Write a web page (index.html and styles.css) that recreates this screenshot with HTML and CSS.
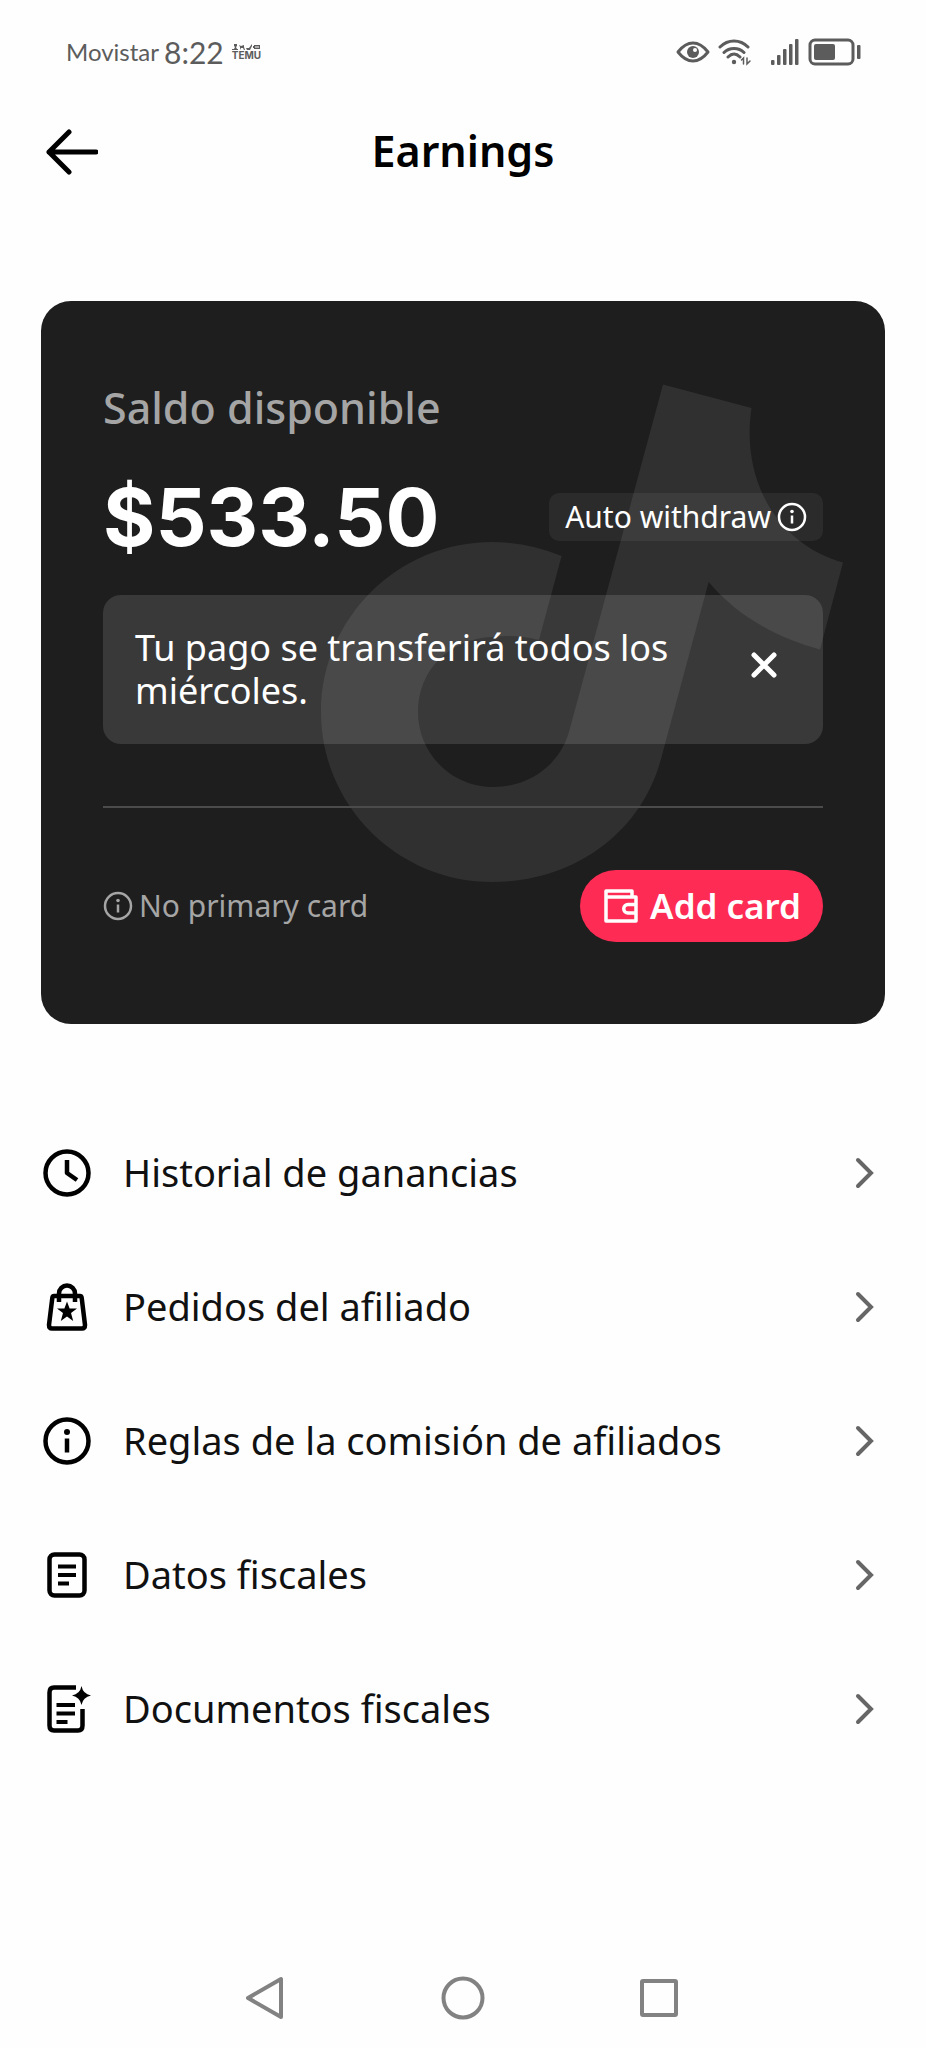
FILE: index.html
```html
<!DOCTYPE html>
<html lang="es">
<head>
  <meta charset="UTF-8">
  <meta name="viewport" content="width=device-width, initial-scale=1.0">
  <title>Earnings</title>
  <link rel="stylesheet" href="styles.css">
</head>
<body>
  <div class="status-bar">
    <div class="status-left">
      <span class="carrier">Movistar</span>
      <span class="clock">8:22</span>
      <span class="temu">
        <svg width="28" height="6" viewBox="0 0 28 6" fill="#5c5c5c">
          <path d="M1 5h5v1H0V5zM2 0h3v2L4 3l1 2H2l1-2-1-1zM7 1l2 1 3-1v2l1 3h-1l-1-2H9L8 6V3zM14 4h3l3-4v2l-2 4h-3zM22 1h6v4h-6zM21 2h1v2h-1z"/>
          <path d="M23 3h4" stroke="#fff" stroke-width="1"/>
        </svg>
        <span>TEMU</span>
      </span>
    </div>
    <div class="status-right">
      <svg width="34" height="24" viewBox="0 0 34 24" fill="none" stroke="#5c5c5c" stroke-width="3">
        <path d="M2 12Q9 3 17 3t15 9q-7 9-15 9T2 12z" stroke-linejoin="round"/>
        <circle cx="17" cy="12" r="6" fill="#5c5c5c" stroke="none"/>
        <circle cx="19" cy="10" r="2" fill="#fff" stroke="none"/>
      </svg>
      <svg class="wifi" width="34" height="28" viewBox="0 0 34 28" fill="none" stroke="#5c5c5c" stroke-width="3" stroke-linecap="round">
        <path d="M2 9Q8 3 16 3t14 6M6 14.500q4-4 10-4t10 4M10 19q3-3 6-3t6 3"/>
        <circle cx="16" cy="24" r="2.200" fill="#5c5c5c" stroke="none"/>
        <path d="M25.500 26v-6l-2 2M29 20v6l3-3" stroke-width="1.500"/>
      </svg>
      <svg width="30" height="28" viewBox="0 0 30 28" fill="#5c5c5c">
        <rect x="1" y="22" width="3.500" height="5" rx="1"/>
        <rect x="7" y="17" width="3.500" height="10" rx="1"/>
        <rect x="13" y="11" width="3.500" height="16" rx="1"/>
        <rect x="19" y="6" width="3.500" height="21" rx="1"/>
        <rect x="25" y="1" width="3.500" height="26" rx="1"/>
      </svg>
      <svg class="battery" width="54" height="28" viewBox="0 0 54 28">
        <rect x="2" y="2" width="43" height="24" rx="5" fill="none" stroke="#5c5c5c" stroke-width="3"/>
        <rect x="6" y="6" width="21" height="16" rx="2" fill="#5c5c5c"/>
        <rect x="49" y="7" width="3.500" height="14" rx="1" fill="#5c5c5c"/>
      </svg>
    </div>
  </div>

  <header class="header">
    <button class="back" type="button" aria-label="Back">
      <svg width="54" height="46" viewBox="0 0 54 46" fill="none" stroke="#000" stroke-width="5" stroke-linecap="round" stroke-linejoin="round">
        <path d="M25 3L5 23l20 20M5 23h47"/>
      </svg>
    </button>
    <h1 class="title">Earnings</h1>
  </header>

  <main class="content">
    <section class="card">
      <svg class="watermark" width="524" height="500" viewBox="320 383 524 500" fill="#303030">
        <path d="M663 384.500L751.500 408C741 478 775 543 843 562.500L820 649.500C777 638 737 616 708.700 582L661 759C641 833 574 882 492 882C398 882 321 806 321 712C321 618 398 542 492 542Q528 542 561.600 556L539 640Q516 634 493 637C450 638 418 670 418 712C418 754 452 787 493 787C530 787 558 765 568 735L570 728L663 384.500Z"/>
      </svg>
      <h2 class="label">Saldo disponible</h2>
      <div class="balance">
        <span class="amount">$533.50</span>
        <button class="auto" type="button">
          Auto withdraw
          <svg width="30" height="30" viewBox="0 0 30 30" fill="none" stroke="#fff">
            <circle cx="15" cy="15" r="13" stroke-width="2.500"/>
            <path d="M15 13.500v8" stroke-width="2.500"/>
            <circle cx="15" cy="9.500" r="1.800" fill="#fff" stroke="none"/>
          </svg>
        </button>
      </div>
      <div class="notice">
        <p>Tu pago se transferirá todos los miércoles.</p>
        <button class="close" type="button" aria-label="Cerrar">
          <svg width="28" height="28" viewBox="0 0 28 28" fill="none" stroke="#fff" stroke-width="5" stroke-linecap="round">
            <path d="M4 4l20 20M24 4L4 24"/>
          </svg>
        </button>
      </div>
      <div class="card-footer">
        <span class="primary">
          <svg width="30" height="30" viewBox="0 0 30 30" fill="none" stroke="#a5a5a5">
            <circle cx="15" cy="15" r="13" stroke-width="2.500"/>
            <path d="M15 13.500v8" stroke-width="2.500"/>
            <circle cx="15" cy="9.500" r="1.800" fill="#a5a5a5" stroke="none"/>
          </svg>
          No primary card
        </span>
        <button class="add" type="button">
          <svg width="34" height="34" viewBox="0 0 34 34" fill="none" stroke="#fff" stroke-width="3.500" stroke-linejoin="round">
            <path d="M28 8V2H2v30h30V8H2M32 15.500h-8a4 4 0 0 0 0 8.500h8"/>
          </svg>
          Add card
        </button>
      </div>
    </section>

    <nav class="menu">
      <a href="#historial">
        <svg width="48" height="48" viewBox="0 0 48 48" fill="none" stroke="#000" stroke-width="4.500">
          <circle cx="24" cy="24" r="21.500"/>
          <path d="M24 11v13l10 7" stroke-linejoin="round"/>
        </svg>
        <span>Historial de ganancias</span>
        <svg class="chevron" width="20" height="32" viewBox="0 0 20 32"><path d="M3 3l13 13L3 29"/></svg>
      </a>
      <a href="#pedidos">
        <svg width="48" height="48" viewBox="0 0 48 48" fill="none" stroke="#000" stroke-width="4.500">
          <path d="M11 13h26q1.500 0 1.700 2L42 42q0 3.500-3 3.500H9Q6 45.500 6 42l3.300-27q.2-2 1.700-2z"/>
          <path d="M16 19v-8.500a8 8 0 0 1 16 0V19"/>
          <path d="M24 18.500l2.600 7H34l-6 4.500 2.200 8-6.200-4.500-6.200 4.500L20 30l-6-4.500h7.400z" fill="#000" stroke="none"/>
        </svg>
        <span>Pedidos del afiliado</span>
        <svg class="chevron" width="20" height="32" viewBox="0 0 20 32"><path d="M3 3l13 13L3 29"/></svg>
      </a>
      <a href="#reglas">
        <svg width="48" height="48" viewBox="0 0 48 48" fill="none" stroke="#000" stroke-width="4.500">
          <circle cx="24" cy="24" r="21.500"/>
          <path d="M24 21.500v14"/>
          <circle cx="24" cy="15" r="3" fill="#000" stroke="none"/>
        </svg>
        <span>Reglas de la comisión de afiliados</span>
        <svg class="chevron" width="20" height="32" viewBox="0 0 20 32"><path d="M3 3l13 13L3 29"/></svg>
      </a>
      <a href="#datos">
        <svg width="48" height="48" viewBox="0 0 48 48" fill="none" stroke="#000" stroke-width="4.500">
          <rect x="6.500" y="3.500" width="35" height="41" rx="5"/>
          <path d="M15 15.500h18M15 24h18M15 32.500h11" stroke-width="4"/>
        </svg>
        <span>Datos fiscales</span>
        <svg class="chevron" width="20" height="32" viewBox="0 0 20 32"><path d="M3 3l13 13L3 29"/></svg>
      </a>
      <a href="#documentos">
        <svg width="48" height="48" viewBox="0 0 48 48" fill="none" stroke="#000" stroke-width="4.500">
          <path d="M33 2.500H11q-4.500 0-4.500 5v33q0 5 4.500 5h24q4.500 0 4.500-5V24"/>
          <path d="M13.500 20H32M13.500 28.500H32M13.500 37h11" stroke-width="4"/>
          <path d="M38.500 1q1.500 8 9.500 9.500-8 1.500-9.500 9.500-1.500-8-9.500-9.500 8-1.500 9.500-9.500z" fill="#000" stroke="none"/>
        </svg>
        <span>Documentos fiscales</span>
        <svg class="chevron" width="20" height="32" viewBox="0 0 20 32"><path d="M3 3l13 13L3 29"/></svg>
      </a>
    </nav>
  </main>

  <footer class="system-nav">
    <button type="button" aria-label="Back">
      <svg width="44" height="44" viewBox="0 0 44 44"><path d="M3 22L36 3v38z"/></svg>
    </button>
    <button type="button" aria-label="Home">
      <svg width="44" height="44" viewBox="0 0 44 44"><circle cx="22" cy="22" r="19.500"/></svg>
    </button>
    <button type="button" aria-label="Recent apps">
      <svg width="44" height="44" viewBox="0 0 44 44"><rect x="5" y="5" width="34" height="34" rx="1"/></svg>
    </button>
  </footer>
</body>
</html>
```
FILE: styles.css
```css
* {
  box-sizing: border-box;
}

body {
  display: flex;
  flex-direction: column;
  min-height: 100vh;
  margin: 0;
  background-color: #fefefe;
  color: #111;
  font-family: "Noto Sans", "Open Sans", sans-serif;
}

button {
  padding: 0;
  border: 0;
  background: none;
  color: inherit;
  font-family: inherit;
  cursor: pointer;
}

svg {
  display: block;
  flex-shrink: 0;
}

/* Status bar */
.status-bar {
  display: flex;
  justify-content: space-between;
  align-items: center;
  height: 103px;
  padding: 0 64px 0 66px;
  color: #5c5c5c;
}

.status-left,
.status-right {
  display: flex;
  align-items: center;
}

.status-left {
  gap: 5px;
}

.carrier {
  font-family: Lato, sans-serif;
  font-size: 24px;
}

.clock {
  font-family: Lato, sans-serif;
  font-size: 30px;
}

.temu {
  margin-left: 3px;
  font-family: Inter, sans-serif;
  font-size: 10px;
  font-weight: 700;
  line-height: 10px;
}

.wifi {
  margin: 0 18px 0 8px;
}

.battery {
  margin-left: 8px;
}

/* Header */
.header {
  display: grid;
  grid-template-columns: 60px 1fr 60px;
  align-items: center;
  height: 98px;
  padding: 0 44px;
}

.title {
  margin: 0;
  padding-bottom: 2px;
  color: #000;
  font-size: 43px;
  font-weight: 600;
  line-height: 60px;
  text-align: center;
}

.content {
  padding: 100px 41px 0;
}

/* Balance card */
.card {
  position: relative;
  padding: 77px 62px 82px;
  border-radius: 30px;
  background-color: #1e1e1e;
  color: #fff;
}

.card > * {
  position: relative;
}

.card .watermark {
  position: absolute;
  top: 82px;
  right: 41px;
}

.label {
  margin: 0;
  color: #a5a5a5;
  font-size: 43px;
  font-weight: 500;
  line-height: 60px;
}

.balance {
  display: flex;
  justify-content: space-between;
  align-items: center;
  height: 157px;
}

.amount {
  font-family: Inter, sans-serif;
  font-size: 80px;
  font-weight: 700;
  line-height: 100px;
}

.auto {
  display: flex;
  align-items: center;
  gap: 6px;
  height: 48px;
  padding: 0 16px;
  border-radius: 10px;
  background-color: rgba(255, 255, 255, 0.06);
  font-size: 30px;
  line-height: 40px;
}

.notice {
  display: flex;
  justify-content: space-between;
  align-items: flex-start;
  padding: 31px 32px 32px;
  border-radius: 18px;
  background-color: rgba(255, 255, 255, 0.12);
}

.notice p {
  max-width: 560px;
  margin: 0;
  font-size: 36px;
  line-height: 43px;
}

.close {
  padding: 25px 13px 0;
}

.card-footer {
  display: flex;
  justify-content: space-between;
  align-items: center;
  margin-top: 62px;
  padding-top: 62px;
  border-top: 2px solid #4b4b4b;
}

.primary {
  display: flex;
  align-items: center;
  gap: 6px;
  color: #a5a5a5;
  font-size: 30px;
  line-height: 40px;
}

.add {
  display: flex;
  align-items: center;
  gap: 12px;
  height: 72px;
  padding: 0 22px 0 24px;
  border-radius: 36px;
  background-color: #fe2c55;
  font-size: 35px;
  font-weight: 600;
  line-height: 48px;
}

/* Menu */
.menu {
  padding-top: 82px;
}

.menu a {
  display: flex;
  align-items: center;
  gap: 32px;
  height: 134px;
  padding: 0 10px 0 2px;
  color: #111;
  font-size: 38px;
  text-decoration: none;
}

.menu span {
  flex: 1;
  padding-bottom: 2px;
}

.chevron {
  fill: none;
  stroke: #666;
  stroke-width: 4;
  stroke-linecap: round;
}

/* System navigation */
.system-nav {
  display: flex;
  justify-content: center;
  gap: 152px;
  margin-top: auto;
  padding-bottom: 28px;
}

.system-nav svg {
  fill: none;
  stroke: #828282;
  stroke-width: 4;
  stroke-linejoin: round;
}
```
